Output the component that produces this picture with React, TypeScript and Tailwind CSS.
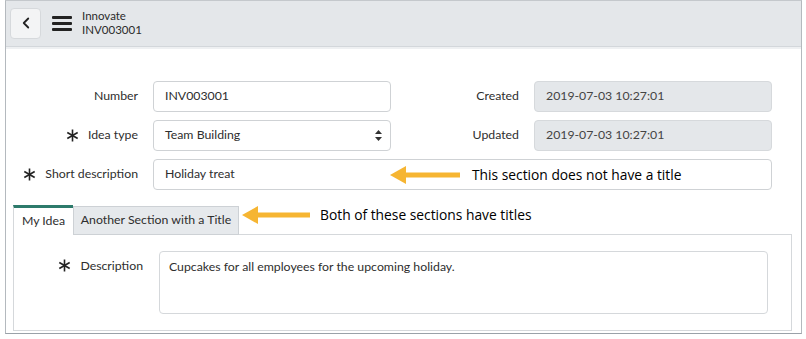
import { ChevronLeft } from 'lucide-react';

const Star = () => (
    <svg width="13" height="13" viewBox="0 0 13 13" className="shrink-0">
        <g stroke="#222" strokeWidth="1.6" strokeLinecap="butt">
            <line x1="6.5" y1="0.5" x2="6.5" y2="12.5" />
            <line x1="1.3" y1="3.5" x2="11.7" y2="9.5" />
            <line x1="1.3" y1="9.5" x2="11.7" y2="3.5" />
        </g>
    </svg>
);

const Arrow = ({ width }: { width: number }) => (
    <svg width={width} height="20" viewBox={`0 0 ${width} 20`}>
        <polygon points={`0,10 16,1 16,19`} fill="#f6b532" />
        <rect x="14" y="7.5" width={width - 14} height="5" fill="#f6b532" />
    </svg>
);

interface FieldProps {
    label: string;
    required?: boolean;
    labelWidth: string;
    children: React.ReactNode;
}

const Field = ({ label, required, labelWidth, children }: FieldProps) => (
    <div className="flex items-center">
        <div className={`flex ${labelWidth} shrink-0 items-center justify-end gap-[9px] pr-[15px] text-[12.3px] text-[#2e2e2e]`}>
            {required && <Star />}
            <span>{label}</span>
        </div>
        {children}
    </div>
);

const inputCls = 'flex h-[31px] items-center rounded-[4px] border border-[#cfd2d5] px-[11px] text-[12.3px] text-[#2e2e2e]';

export default function App() {
    return (
        <div className="w-[806px] h-[339px] bg-white" style={{ fontFamily: 'Lato, "Open Sans", sans-serif' }}>
            <div className="ml-[5px] w-[797px] h-[334px] border border-t-[#c4c8cc] border-x-[#b4b9be] border-b-[#9aa1a8] flex flex-col">
                {/* header */}
                <div className="flex h-[46px] shrink-0 items-center bg-[#e4e7ea] border-b border-[#d3d7db] pl-[4px] pb-[1px]">
                    <button className="flex w-[31px] h-[31px] items-center justify-center rounded-[4px] border border-[#d6d9dc] bg-[#f3f4f5]">
                        <ChevronLeft size={18} strokeWidth={2.4} color="#222" />
                    </button>
                    <div className="flex flex-col gap-[3px] ml-[11px]">
                        <span className="block w-[20px] h-[3px] bg-[#222] rounded-[1px]" />
                        <span className="block w-[20px] h-[3px] bg-[#222] rounded-[1px]" />
                        <span className="block w-[20px] h-[3px] bg-[#222] rounded-[1px]" />
                    </div>
                    <div className="flex flex-col ml-[10px] text-[11.5px] leading-[14px] text-[#2b2b2b]">
                        <span>Innovate</span>
                        <span>INV003001</span>
                    </div>
                </div>
                <div className="h-[2px] bg-[#eef0f2]" />

                {/* form */}
                <div className="flex flex-col gap-[8px] pt-[32px]">
                    <div className="flex">
                        <Field label="Number" labelWidth="w-[147px]">
                            <div className={`${inputCls} w-[238px]`}>INV003001</div>
                        </Field>
                        <Field label="Created" labelWidth="w-[143px]">
                            <div className={`${inputCls} w-[238px] bg-[#e4e7ea] border-[#d6d9dc] text-[#444]`}>2019-07-03 10:27:01</div>
                        </Field>
                    </div>
                    <div className="flex">
                        <Field label="Idea type" required labelWidth="w-[147px]">
                            <div className={`${inputCls} w-[238px] justify-between pr-[8px]`}>
                                <span>Team Building</span>
                                <svg width="7" height="11" viewBox="0 0 7 11">
                                    <polygon points="3.5,0 7,4 0,4" fill="#333" />
                                    <polygon points="0,7 7,7 3.5,11" fill="#333" />
                                </svg>
                            </div>
                        </Field>
                        <Field label="Updated" labelWidth="w-[143px]">
                            <div className={`${inputCls} w-[238px] bg-[#e4e7ea] border-[#d6d9dc] text-[#444]`}>2019-07-03 10:27:01</div>
                        </Field>
                    </div>
                    <Field label="Short description" required labelWidth="w-[147px]">
                        <div className={`${inputCls} w-[619px] relative`}>
                            <span>Holiday treat</span>
                            <div className="absolute left-[236px] top-[5px] flex items-center gap-[12px]">
                                <Arrow width={70} />
                                <span className="text-[13.8px] text-black" style={{ fontFamily: '"Open Sans", sans-serif' }}>This section does not have a title</span>
                            </div>
                        </div>
                    </Field>
                </div>

                {/* tabs */}
                <div className="flex flex-col ml-[7px] mt-[15px] w-[779px]">
                    <div className="flex items-end h-[30px] relative">
                        <div className="flex h-[30px] w-[60px] items-center justify-center border-t-[3px] border-t-[#2d7a6b] border-l border-[#d5d8db] text-[12.3px] text-[#2e2e2e] bg-white">My Idea</div>
                        <div className="flex h-[29px] w-[166px] items-center justify-center border border-[#cdd1d5] bg-[#e6e9ec] text-[12.3px] text-[#2e2e2e]">Another Section with a Title</div>
                        <div className="flex-1 border-b border-[#d5d8db]" />
                        <div className="absolute left-[229px] top-[0px] flex items-center gap-[10px]">
                            <Arrow width={68} />
                            <span className="text-[13.8px] text-black" style={{ fontFamily: '"Open Sans", sans-serif' }}>Both of these sections have titles</span>
                        </div>
                    </div>
                    <div className="flex h-[96px] border-x border-b border-[#d5d8db] pt-[16px]">
                        <div className="flex w-[145px] shrink-0 justify-end gap-[9px] pr-[16px] pt-[6px] text-[12.3px] text-[#2e2e2e]">
                            <div className="pt-[2px]"><Star /></div>
                            <span>Description</span>
                        </div>
                        <div className="w-[609px] h-[63px] rounded-[4px] border border-[#d5d8db] px-[9px] pt-[6px] text-[12.3px] text-[#2e2e2e]">
                            Cupcakes for all employees for the upcoming holiday.
                        </div>
                    </div>
                </div>
            </div>
        </div>
    );
}
